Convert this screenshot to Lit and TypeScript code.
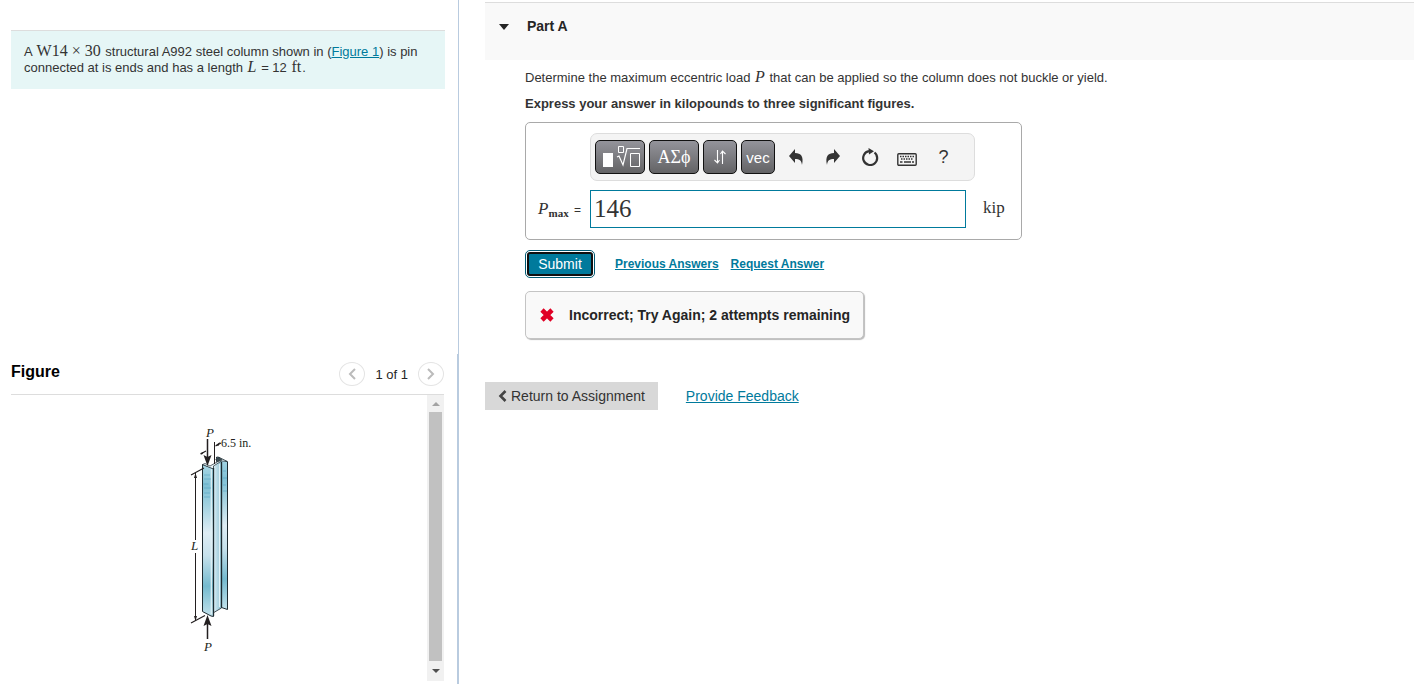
import { LitElement, html, css } from "lit";
import { customElement, state } from "lit/decorators.js";

@customElement("figure-viewer")
class FigureViewer extends LitElement {
  static styles = css`
    :host {
      display: flex;
      flex-direction: column;
      min-height: 0;
      font-family: "Liberation Sans", Arial, sans-serif;
      color: #252525;
    }
    .head {
      display: flex;
      align-items: center;
      height: 39px;
      border-bottom: 1px solid #ddd;
    }
    h2 {
      flex: 1;
      margin: 0 0 6px;
      font-size: 16px;
      line-height: 20px;
      color: #000;
    }
    .pager {
      display: flex;
      align-items: center;
      gap: 10px;
      font-size: 13px;
      line-height: 20px;
      padding-bottom: 2px;
    }
    .pager span {
      padding-top: 3px;
    }
    .pager button {
      display: grid;
      place-items: center;
      width: 26px;
      height: 24px;
      padding: 0;
      border: 1px solid #e4e4e4;
      border-radius: 50%;
      background: #fff;
    }
    .body {
      display: flex;
      flex: 1;
      min-height: 0;
    }
    .picture {
      flex: 1;
      min-width: 0;
      display: flex;
      justify-content: center;
      padding: 30px 0 0 12px;
    }
    .picture svg {
      flex: none;
      width: 90px;
      height: 240px;
    }
    .label {
      font-family: "Liberation Serif", "Times New Roman", serif;
      font-size: 12px;
      fill: #231f20;
    }
    .symbol {
      font-style: italic;
      font-size: 13px;
    }
    .bar {
      display: flex;
      flex-direction: column;
      width: 17px;
      background: #f1f1f1;
    }
    .bar button {
      display: grid;
      place-items: center;
      height: 17px;
      padding: 0;
      border: 0;
      background: none;
    }
    .bar .down {
      height: 20px;
    }
    .thumb {
      flex: 1;
      margin: 0 2px;
      background: #c1c1c1;
    }
  `;

  render() {
    return html`
      <div class="head">
        <h2>Figure</h2>
        <div class="pager">
          <button type="button" aria-label="Previous figure">
            <svg width="8" height="12" viewBox="0 0 8 12" fill="none" stroke="#bbb" stroke-width="2"><path d="M7 1 2 6l5 5" /></svg>
          </button>
          <span>1 of 1</span>
          <button type="button" aria-label="Next figure">
            <svg width="8" height="12" viewBox="0 0 8 12" fill="none" stroke="#bbb" stroke-width="2"><path d="m1 1 5 5-5 5" /></svg>
          </button>
        </div>
      </div>
      <div class="body">
        <div class="picture">
          <svg viewBox="180 425 90 240" role="img" aria-label="Column of length L loaded by P at each end">
            <defs>
              <linearGradient id="front" x1="0" y1="0" x2="0" y2="1">
                <stop offset="0" stop-color="#a9d7e5" />
                <stop offset=".14" stop-color="#7fc0d5" />
                <stop offset=".26" stop-color="#9fd0df" />
                <stop offset=".45" stop-color="#deedf5" />
                <stop offset=".6" stop-color="#c6e1ec" />
                <stop offset=".8" stop-color="#74bacf" />
                <stop offset="1" stop-color="#c2e2ec" />
              </linearGradient>
              <linearGradient id="web" x1="0" y1="0" x2="1" y2="0">
                <stop offset="0" stop-color="#e4f2f7" />
                <stop offset=".5" stop-color="#b4d8e5" />
                <stop offset="1" stop-color="#86bbce" />
              </linearGradient>
            </defs>
            <g stroke="#1d2a30" stroke-linejoin="round">
              <path d="M213 465 221.500 460V608L213 613Z" fill="url(#web)" stroke-width=".8" />
              <path d="M216 457.500 218 457 227.500 462V609.500L221.500 607.500V462Z" fill="url(#front)" stroke-width="1" />
              <path d="M221.500 462V607.500" stroke-width="1.300" />
              <path d="M202.500 464.500 213.500 468.500V616.500L211 616 202.500 611.500Z" fill="url(#front)" stroke-width="1" />
              <path d="M202.500 464.500 205 463.500 210 466 217 462 216 459 219 457.500 227.500 461.500 221.500 461 213.500 466V469Z" fill="#eaf5f9" stroke-width=".7" />
              <path d="M216 459 219 457.500 222 460 217 462Z" fill="#3c4c53" stroke-width=".6" />
              <path d="M213.500 468V616" stroke-width="1.300" />
            </g>
            <path d="M211.300 469V614M219.500 464V607" stroke="#e1f1f6" stroke-width="1.200" />
            <path d="M204 475h6M204 479h7M203.500 484h5M204 488h7M204 493h6M204 497h6M223 471h3M223 478h4M223 485h3M223 491h4" stroke="#4b9fbd" stroke-width=".8" opacity=".65" />
            <g stroke="#231f20" fill="none">
              <path d="M207.500 439V457M207.500 624V639" stroke-width="1.500" />
              <path d="M214.500 442V464M195.500 473V540M195.500 553V621" stroke-width="1" />
              <path d="M191 475 204 468M191 623 205 615.500M200.500 454 206 451M215.500 446 221 443" stroke-width="1.200" />
            </g>
            <path d="m203.500 455 4 11 4-11-4 2Z" fill="#231f20" />
            <path d="m203.500 626 4-11 4 11-4-2Z" fill="#231f20" />
            <path d="m194 478 1.500-5 1.500 5ZM194 616l1.500 5 1.500-5ZM200.500 453l4-1.300-2.800 3ZM216 445l4-3-1.600 4Z" fill="#231f20" />
            <text class="label symbol" x="206" y="437">P</text>
            <text class="label" x="221" y="447">6.5 in.</text>
            <text class="label symbol" x="191" y="550">L</text>
            <text class="label symbol" x="204" y="651">P</text>
          </svg>
        </div>
        <div class="bar">
          <button type="button" aria-label="Scroll up">
            <svg width="8" height="4" viewBox="0 0 8 4"><path d="M0 4 4 0l4 4Z" fill="#a3a3a3" /></svg>
          </button>
          <div class="thumb"></div>
          <button class="down" type="button" aria-label="Scroll down">
            <svg width="8" height="4" viewBox="0 0 8 4"><path d="m0 0 4 4 4-4Z" fill="#505050" /></svg>
          </button>
        </div>
      </div>
    `;
  }
}

@customElement("answer-editor")
class AnswerEditor extends LitElement {
  @state() value = "146";

  static styles = css`
    :host {
      display: block;
      max-width: 497px;
      font-family: "Liberation Sans", Arial, sans-serif;
      color: #333;
    }
    .box {
      display: grid;
      grid-template-columns: 52px minmax(0, 1fr) 46px;
      column-gap: 9px;
      row-gap: 9px;
      align-items: center;
      padding: 10px 0 11px 3px;
      border: 1px solid #a9a9a9;
      border-radius: 5px;
    }
    .tools {
      grid-column: 2 / 4;
      display: flex;
      align-items: center;
      gap: 4px;
      height: 46px;
      margin-right: 46px;
      padding-left: 4px;
      border: 1px solid #ddd;
      border-radius: 7px;
      background: #f4f4f4;
    }
    .tools button {
      display: grid;
      place-items: center;
      flex: none;
      height: 34px;
      padding: 0;
      font-family: inherit;
      color: #333;
    }
    .tools .dark {
      width: 34px;
      border: 1px solid #111;
      border-radius: 5px;
      background: linear-gradient(#94949b, #636365);
      color: #fff;
      font-size: 15px;
    }
    .tools .wide {
      width: 50px;
    }
    .tools .greek {
      font-family: "Liberation Serif", "Times New Roman", serif;
      font-size: 18px;
    }
    .tools .plain {
      width: 33px;
      border: 0;
      background: none;
      font-size: 18px;
    }
    label {
      text-align: right;
      white-space: nowrap;
      font-size: 12px;
      line-height: 20px;
    }
    .serif {
      font-family: "Liberation Serif", "Times New Roman", serif;
      font-size: 17px;
    }
    .italic {
      font-style: italic;
    }
    sub {
      font-family: "Liberation Serif", "Times New Roman", serif;
      font-size: 11px;
      font-weight: bold;
      line-height: 0;
      vertical-align: -3px;
      margin-right: 2px;
    }
    input {
      box-sizing: border-box;
      width: 100%;
      height: 38px;
      padding: 0 3px;
      border: 1px solid #007a9c;
      background: #fff;
      color: #333;
      font-family: "Liberation Serif", "Times New Roman", serif;
      font-size: 25px;
      outline: 0;
    }
    .unit {
      padding: 0 0 2px 8px;
    }
  `;

  private onInput(e: Event) {
    this.value = (e.target as HTMLInputElement).value;
  }

  render() {
    return html`
      <div class="box">
        <div class="tools" role="toolbar" aria-label="Math tools">
          <button class="dark wide" type="button" aria-label="Templates">
            <svg width="40" height="24" viewBox="0 0 40 24" fill="none" stroke="#fff">
              <path d="M3 8h10v14H3Z" fill="#fff" stroke="none" />
              <path d="M18.500 1.500h5v6h-5ZM30.500 8.500h9v13h-9Z" />
              <path d="m17 12 2-1 4 9 4-16.500h13" stroke-width="1.200" />
            </svg>
          </button>
          <button class="dark wide greek" type="button">ΑΣϕ</button>
          <button class="dark" type="button" aria-label="Arrows">
            <svg width="14" height="16" viewBox="0 0 14 16" fill="none" stroke="#fff" stroke-width="1.100">
              <path d="M4.500 1v12M9.500 15V3" />
              <path d="M1.500 11 4.500 14l2-3M7.500 5l2-3 3 3" />
            </svg>
          </button>
          <button class="dark" type="button">vec</button>
          <button class="plain" type="button" aria-label="Undo">
            <svg width="16" height="16" viewBox="0 0 16 16"><path d="M7 0v4c6 0 9 3.500 7 12-.4-4.500-2.500-6-7-6v4L1 7Z" fill="#333" /></svg>
          </button>
          <button class="plain" type="button" aria-label="Redo">
            <svg width="16" height="16" viewBox="0 0 16 16"><path d="M9 0v4c-6 0-9 3.500-7 12 .4-4.500 2.500-6 7-6v4l6-7Z" fill="#333" /></svg>
          </button>
          <button class="plain" type="button" aria-label="Reset">
            <svg width="18" height="18" viewBox="0 0 18 18"><path d="M13.500 4.500A7 7 0 1 1 8 3.100" fill="none" stroke="#333" stroke-width="2.200" /><path d="M7.500 0 13 3.200 8 6.500Z" fill="#333" /></svg>
          </button>
          <button class="plain" type="button" aria-label="Keyboard">
            <svg width="20" height="18" viewBox="0 0 20 18" fill="none" stroke="#333">
              <rect x=".8" y="5.800" width="18.400" height="11.400" rx="1" stroke-width="1.400" />
              <path d="M3 8.500h14M4 11h12.500" stroke-width="1.500" stroke-dasharray="1.500 1" />
              <path d="M3 14h2.500M7 14h7M15 14h2" stroke-width="1.500" />
            </svg>
          </button>
          <button class="plain" type="button" aria-label="Help">?</button>
        </div>
        <label for="answer"><span class="serif italic">P</span><sub>max</sub> =</label>
        <input id="answer" type="text" .value=${this.value} @input=${this.onInput} />
        <span class="serif unit">kip</span>
      </div>
    `;
  }
}

@customElement("app-root")
class AppRoot extends LitElement {
  @state() open = true;

  static styles = css`
    :host {
      display: grid;
      grid-template-columns: 459px minmax(0, 1fr);
      height: 100vh;
      background: #fff;
      font-family: "Liberation Sans", Arial, sans-serif;
      font-size: 13px;
      line-height: 16px;
      color: #333;
    }
    a {
      color: #007a9c;
    }
    aside {
      display: flex;
      flex-direction: column;
      min-height: 0;
    }
    .statement {
      box-sizing: border-box;
      flex: 0 0 354px;
      padding: 30px 13px 0 11px;
      border-right: 1px solid #b9cbdf;
    }
    .statement p {
      margin: 0;
      padding: 13px;
      border-top: 1px solid #ddd;
      background: #e6f6f6;
    }
    .math {
      margin: 0 1px;
      font-family: "Liberation Serif", "Times New Roman", serif;
      font-size: 16px;
      line-height: 0;
    }
    .italic {
      font-style: italic;
    }
    figure-viewer {
      flex: 1;
      padding: 1px 13px 3px 11px;
      border-right: 2px solid #b9cbdf;
    }
    main {
      padding: 2px 0 0 26px;
    }
    .part {
      display: flex;
      align-items: flex-start;
      height: 57px;
      border-top: 1px solid #ddd;
      background: #f9f9f9;
    }
    .part button {
      display: flex;
      align-items: center;
      gap: 18px;
      padding: 15px 14px;
      border: 0;
      background: none;
      color: #252525;
      font: bold 14px/17px "Liberation Sans", Arial, sans-serif;
    }
    .content {
      padding: 0 40px;
    }
    .content p {
      margin: 0 0 10px;
    }
    .content p:first-child {
      padding-top: 10px;
    }
    .actions {
      display: flex;
      align-items: center;
      margin-top: 10px;
      font-size: 12px;
      font-weight: bold;
      gap: 12px;
    }
    .submit {
      width: 66px;
      height: 24px;
      margin: 2px 10px 2px 2px;
      padding: 0;
      border: 2px solid #101010;
      border-radius: 3px;
      outline: 1px solid #005b75;
      outline-offset: 1px;
      box-shadow: 0 0 0 1px #fff;
      background: #007a9c;
      color: #fff;
      font: 14px/18px "Liberation Sans", Arial, sans-serif;
    }
    .feedback {
      display: inline-flex;
      align-items: center;
      gap: 14px;
      height: 46px;
      margin-top: 13px;
      padding: 0 13px;
      border: 1px solid #c4c4c4;
      border-radius: 5px;
      box-shadow: 1px 1px 1px #bbb;
      background: #f9f9f9;
      color: #252525;
      font-size: 14px;
      line-height: 18px;
      font-weight: bold;
    }
    .footer {
      display: flex;
      align-items: center;
      gap: 28px;
      margin-top: 43px;
      font-size: 14px;
    }
    .return {
      display: flex;
      align-items: center;
      gap: 4px;
      height: 28px;
      padding: 0 13px;
      border: 0;
      background: #d8d8d8;
      color: #333;
      font: 14px/18px "Liberation Sans", Arial, sans-serif;
    }
  `;

  render() {
    return html`
      <aside>
        <section class="statement">
          <p>
            A <span class="math">W14 × 30</span> structural A992 steel column shown in (<a href="#figure">Figure 1</a>) is pin
            connected at is ends and has a length <span class="math italic">L</span> = 12 <span class="math">ft</span>.
          </p>
        </section>
        <figure-viewer id="figure"></figure-viewer>
      </aside>
      <main>
        <div class="part">
          <button type="button" aria-expanded=${this.open} @click=${() => (this.open = !this.open)}>
            <svg width="10" height="6" viewBox="0 0 10 6"><path d="M0 0h10L5 6Z" fill="#252525" /></svg>
            Part A
          </button>
        </div>
        <div class="content" ?hidden=${!this.open}>
          <p>
            Determine the maximum eccentric load <span class="math italic">P</span> that can be applied so the column does
            not buckle or yield.
          </p>
          <p><b>Express your answer in kilopounds to three significant figures.</b></p>
          <answer-editor></answer-editor>
          <div class="actions">
            <button class="submit" type="button">Submit</button>
            <a href="#previous">Previous Answers</a>
            <a href="#request">Request Answer</a>
          </div>
          <div class="feedback" role="status">
            <svg width="16" height="16" viewBox="0 0 16 16"><path d="m3 3 10 10m0-10-10 10" stroke="#e00025" stroke-width="4.600" /></svg>
            Incorrect; Try Again; 2 attempts remaining
          </div>
        </div>
        <div class="footer">
          <button class="return" type="button">
            <svg width="9" height="12" viewBox="0 0 9 12"><path d="M7.500 1 2.500 6l5 5" fill="none" stroke="#444" stroke-width="2.600" /></svg>
            Return to Assignment
          </button>
          <a href="#feedback">Provide Feedback</a>
        </div>
      </main>
    `;
  }
}
